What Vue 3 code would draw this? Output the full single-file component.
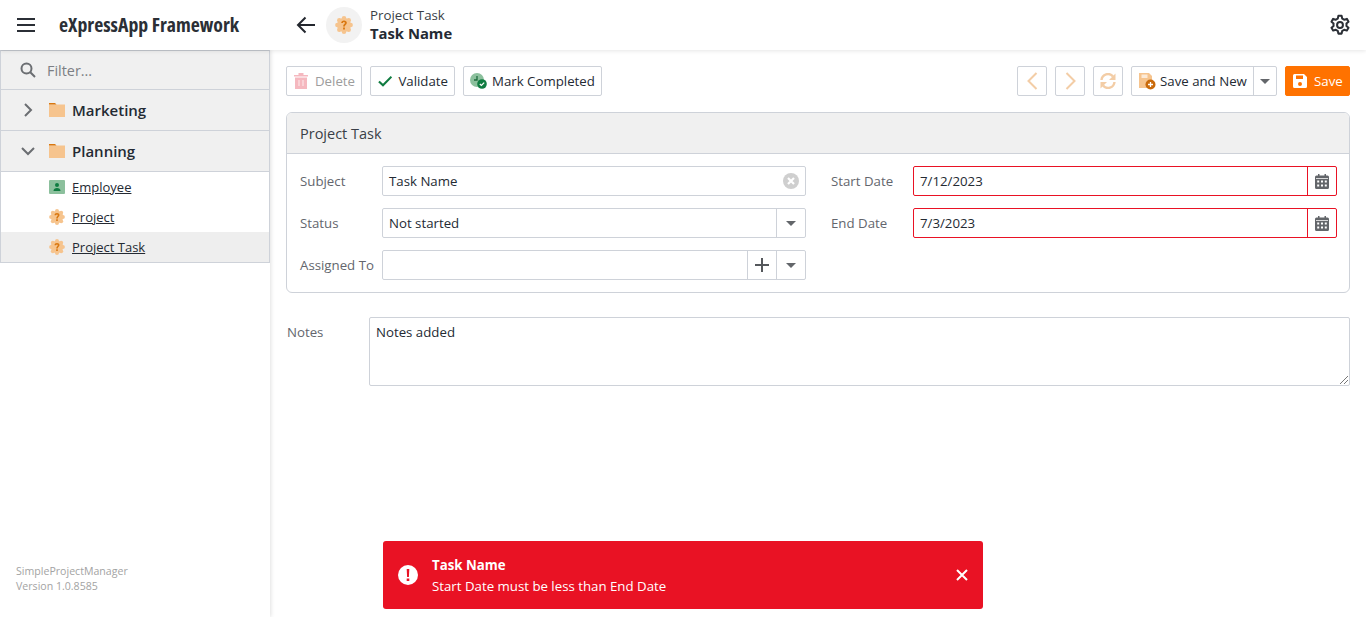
<template>
  <div class="app">
    <svg width="0" height="0" class="defs">
      <defs>
        <g id="q-badge">
          <circle cx="8" cy="8" r="6.200" fill="#f6c48e"/>
          <circle v-for="b in bumps" :key="b.x" :cx="b.x" :cy="b.y" r="2" fill="#f6c48e"/>
          <path d="M5.500 6.300C5.500 4.900 6.600 4 8 4s2.500.8 2.500 2.100c0 1.800-1.700 1.800-1.700 3.300H7.200c0-2.200 1.600-2.200 1.600-3.200 0-.5-.3-.8-.8-.8s-.9.300-.9.900zM7.200 10.200h1.600v1.700H7.200z" fill="#d9770f"/>
        </g>
        <g id="cal">
          <path fill-rule="evenodd" d="M3 0h1.500v1.500h5V0H11v1.500h1.500A1.500 1.500 0 0 1 14 3v10.500a1.500 1.500 0 0 1-1.500 1.500h-11A1.500 1.500 0 0 1 0 13.500V3a1.500 1.500 0 0 1 1.500-1.500H3zM1 4v.8h12V4zM2.200 6.500v2h2v-2zM6 6.500v2h2v-2zM9.800 6.500v2h2v-2zM2.200 10.500v2h2v-2zM6 10.500v2h2v-2zM9.800 10.500v2h2v-2z" fill="#63666a"/>
        </g>
      </defs>
    </svg>

    <header class="topbar">
      <div class="brand">
        <button class="plain menu" aria-label="Menu">
          <svg width="18" height="14" viewBox="0 0 18 14"><path d="M0 1h18M0 7h18M0 13h18" stroke="#2b2f36" stroke-width="2" fill="none"/></svg>
        </button>
        <span class="brand-name">eXpressApp Framework</span>
      </div>
      <div class="title-area">
        <button class="plain back" aria-label="Back">
          <svg width="20" height="18" viewBox="0 0 20 18"><path d="M19 9H2M9.500 1.500 2 9l7.500 7.500" stroke="#23272e" stroke-width="2" fill="none"/></svg>
        </button>
        <div class="avatar"><svg width="18" height="18" viewBox="0 0 16 16"><use href="#q-badge"/></svg></div>
        <div class="titles">
          <div class="t1">Project Task</div>
          <div class="t2">Task Name</div>
        </div>
      </div>
      <button class="plain gear" aria-label="Settings">
        <svg width="22" height="22" viewBox="0 0 24 24" fill="none" stroke="#2b2f36" stroke-width="2.200" stroke-linejoin="round"><circle cx="12" cy="12" r="3.200"/><path d="M10.200 2h3.600l.6 3a7.500 7.500 0 0 1 2.200 1.300l2.900-1 1.800 3.100-2.300 2a7.500 7.500 0 0 1 0 2.600l2.300 2-1.800 3.100-2.900-1a7.500 7.500 0 0 1-2.200 1.300l-.6 3h-3.600l-.6-3a7.500 7.500 0 0 1-2.200-1.300l-2.900 1-1.800-3.100 2.300-2a7.500 7.500 0 0 1 0-2.600l-2.300-2 1.800-3.100 2.900 1A7.500 7.500 0 0 1 9.600 5z"/></svg>
      </button>
    </header>

    <div class="body">
      <aside class="sidebar">
        <nav class="nav">
          <div class="filter">
            <svg width="16" height="16" viewBox="0 0 16 16" fill="none" stroke="#6b6e72" stroke-width="2"><circle cx="6.500" cy="6.500" r="5"/><path d="M10.300 10.300 15 15"/></svg>
            <span>Filter...</span>
          </div>
          <div class="group">
            <svg class="chev" width="14" height="14" viewBox="0 0 14 14" fill="none" stroke="#6b6e72" stroke-width="2"><path d="M4 1l6 6-6 6"/></svg>
            <svg class="folder" width="16" height="14" viewBox="0 0 16 14"><path d="M0 1.500h16V14H0z" fill="#f6c48e"/><path d="M0 0h6l1.500 1.500H0z" fill="#d9770f"/></svg>
            <span>Marketing</span>
          </div>
          <div class="group">
            <svg class="chev" width="14" height="14" viewBox="0 0 14 14" fill="none" stroke="#6b6e72" stroke-width="2"><path d="M1 4l6 6 6-6"/></svg>
            <svg class="folder" width="16" height="14" viewBox="0 0 16 14"><path d="M0 1.500h16V14H0z" fill="#f6c48e"/><path d="M0 0h6l1.500 1.500H0z" fill="#d9770f"/></svg>
            <span>Planning</span>
          </div>
          <a class="item">
            <svg width="16" height="14" viewBox="0 0 16 14"><rect width="16" height="14" rx="1" fill="#8cc09d"/><circle cx="8" cy="5" r="2" fill="#107c41"/><path d="M4.500 11c0-2 1.500-3 3.500-3s3.500 1 3.500 3z" fill="#107c41"/></svg>
            <span>Employee</span>
          </a>
          <a class="item">
            <svg width="16" height="16" viewBox="0 0 16 16"><use href="#q-badge"/></svg>
            <span>Project</span>
          </a>
          <a class="item active">
            <svg width="16" height="16" viewBox="0 0 16 16"><use href="#q-badge"/></svg>
            <span>Project Task</span>
          </a>
        </nav>
        <div class="about">
          <div>SimpleProjectManager</div>
          <div>Version 1.0.8585</div>
        </div>
      </aside>

      <main class="main">
        <div class="toolbar">
          <button class="btn disabled">
            <svg width="14" height="16" viewBox="0 0 14 16"><path d="M0 2h14v1.500H0zM4.500 0h5v2h-5z" fill="#f5b8bf"/><path d="M1 4.500h12V16H1z" fill="#f5b8bf"/><path d="M5 7v6M9 7v6" stroke="#fbe0e3" stroke-width="1.300"/></svg>
            <span>Delete</span>
          </button>
          <button class="btn validate">
            <svg width="15" height="12" viewBox="0 0 15 12" fill="none"><path d="M1 6.500 5.200 10.500 14 1.500" stroke="#107c41" stroke-width="2.200"/></svg>
            <span>Validate</span>
          </button>
          <button class="btn mark">
            <svg width="17" height="16" viewBox="0 0 17 16"><circle cx="7" cy="7" r="7" fill="#8cc09d"/><path d="M7 3v4H4" stroke="#1d6b3c" stroke-width="1.300" fill="none"/><circle cx="12" cy="11" r="4.800" fill="#107c41"/><path d="M9.800 11l1.600 1.500 2.800-2.900" stroke="#fff" stroke-width="1.200" fill="none"/></svg>
            <span>Mark Completed</span>
          </button>
          <div class="spacer"></div>
          <button class="btn square" aria-label="Previous">
            <svg width="11" height="18" viewBox="0 0 11 18" fill="none"><path d="M9.500 1 1.500 9l8 8" stroke="#f3cda6" stroke-width="2"/></svg>
          </button>
          <button class="btn square" aria-label="Next">
            <svg width="11" height="18" viewBox="0 0 11 18" fill="none"><path d="M1.500 1l8 8-8 8" stroke="#f3cda6" stroke-width="2"/></svg>
          </button>
          <button class="btn square" aria-label="Refresh">
            <svg width="16" height="16" viewBox="0 0 16 16" fill="none" stroke="#f3cda6" stroke-width="2.400"><path d="M1.500 7A6.500 6.500 0 0 1 13 3.500"/><path d="M14.500 9A6.500 6.500 0 0 1 3 12.500"/><path d="M15.500 .5v6.500h-6.500z" fill="#f3cda6" stroke="none"/><path d="M.5 15.500V9h6.500z" fill="#f3cda6" stroke="none"/></svg>
          </button>
          <div class="split">
            <button class="split-main">
              <svg width="18" height="17" viewBox="0 0 18 17"><path d="M1 0h10l3 3v12H1z" fill="#f6c48e"/><path d="M3.500 1.500h6v3.500h-6z" fill="#fff" opacity=".65"/><circle cx="12.500" cy="11.500" r="5" fill="#c96a0a"/><path d="M10 11.500h5M12.500 9v5" stroke="#fff" stroke-width="1.300"/></svg>
              <span>Save and New</span>
            </button>
            <button class="split-arrow" aria-label="More"><i class="caret"></i></button>
          </div>
          <button class="btn primary">
            <svg width="14" height="14" viewBox="0 0 14 14"><path fill-rule="evenodd" d="M1.500 0H11l3 3v9.500a1.500 1.500 0 0 1-1.500 1.500h-11A1.500 1.500 0 0 1 0 12.500v-11A1.500 1.500 0 0 1 1.500 0zM3 1.500V5h7V1.500zM7 8a2 2 0 1 0 0 4 2 2 0 0 0 0-4z" fill="#fff"/></svg>
            <span>Save</span>
          </button>
        </div>

        <section class="card">
          <div class="card-head">Project Task</div>
          <div class="card-body">
            <div class="col">
              <div class="field">
                <label>Subject</label>
                <div class="input">
                  <span class="value">Task Name</span>
                  <svg class="clear" width="16" height="16" viewBox="0 0 16 16"><circle cx="8" cy="8" r="8" fill="#cfcfcf"/><path d="M5 5l6 6M11 5l-6 6" stroke="#fff" stroke-width="2.200"/></svg>
                </div>
              </div>
              <div class="field">
                <label>Status</label>
                <div class="input">
                  <span class="value">Not started</span>
                  <span class="addon"><i class="caret"></i></span>
                </div>
              </div>
              <div class="field">
                <label>Assigned To</label>
                <div class="input">
                  <span class="value"></span>
                  <span class="addon"><svg width="14" height="14" viewBox="0 0 14 14"><path d="M7 0v14M0 7h14" stroke="#55585c" stroke-width="2"/></svg></span>
                  <span class="addon"><i class="caret"></i></span>
                </div>
              </div>
            </div>
            <div class="col">
              <div class="field">
                <label>Start Date</label>
                <div class="input invalid">
                  <span class="value">7/12/2023</span>
                  <span class="addon"><svg width="14" height="15" viewBox="0 0 14 15"><use href="#cal"/></svg></span>
                </div>
              </div>
              <div class="field">
                <label>End Date</label>
                <div class="input invalid">
                  <span class="value">7/3/2023</span>
                  <span class="addon"><svg width="14" height="15" viewBox="0 0 14 15"><use href="#cal"/></svg></span>
                </div>
              </div>
            </div>
          </div>
        </section>

        <div class="notes">
          <label>Notes</label>
          <div class="textarea">
            Notes added
            <svg class="grip" width="8" height="8" viewBox="0 0 8 8"><path d="M8 0 0 8M8 4 4 8" stroke="#777" stroke-width="1"/></svg>
          </div>
        </div>
      </main>
    </div>

    <div class="toast">
      <svg width="20" height="20" viewBox="0 0 20 20"><circle cx="10" cy="10" r="10" fill="#fff"/><path d="M8.700 4h2.600l-.4 8H9.100zM8.700 13.500h2.600V16H8.700z" fill="#e91224"/></svg>
      <div class="toast-text">
        <div class="toast-title">Task Name</div>
        <div>Start Date must be less than End Date</div>
      </div>
      <svg class="toast-close" width="12" height="12" viewBox="0 0 12 12"><path d="M1 1l10 10M11 1 1 11" stroke="#fff" stroke-width="2"/></svg>
    </div>
  </div>
</template>

<script setup>
const bumps = Array.from({ length: 8 }, (_, i) => {
  const a = (i * Math.PI) / 4
  return { x: 8 + 5.9 * Math.cos(a), y: 8 + 5.9 * Math.sin(a) }
})
</script>

<style>
html, body { margin: 0; }
</style>

<style scoped>
* { box-sizing: border-box; }
.app {
  position: relative;
  height: 617px;
  overflow: hidden;
  background: #fff;
  color: #242a33;
  font-family: "Open Sans", "Noto Sans", sans-serif;
  font-size: 13.25px;
}
.defs { position: absolute; }
.plain { background: none; border: 0; padding: 0; display: flex; align-items: center; }
.topbar {
  position: relative;
  z-index: 2;
  height: 50px;
  display: flex;
  align-items: center;
  background: #fff;
  box-shadow: 0 1px 4px rgba(0,0,0,.1);
}
.brand { width: 270px; display: flex; align-items: center; flex: none; }
.menu { margin-left: 17px; }
.brand-name {
  margin: -2px 0 0 24px;
  font-size: 19.8px;
  font-weight: 700;
  color: #2b2f36;
  font-stretch: 75%;
  white-space: nowrap;
}
.title-area { display: flex; align-items: center; flex: 1; }
.back { margin-left: 26px; }
.avatar {
  width: 36px; height: 36px; border-radius: 50%;
  background: #f2f2f2; margin-left: 10px;
  display: flex; align-items: center; justify-content: center;
}
.titles { margin-left: 8px; line-height: 18px; margin-top: -2px; }
.t1 { font-size: 13.3px; color: #3a3f47; }
.t2 { font-size: 14.8px; font-weight: 700; color: #242a33; }
.gear { margin-right: 15px; }

.body { display: flex; height: 567px; }
.sidebar {
  width: 270px;
  flex: none;
  display: flex;
  flex-direction: column;
  justify-content: space-between;
  box-shadow: 1px 0 4px rgba(0,0,0,.12);
  position: relative;
  z-index: 1;
}
.nav {
  border: 1px solid #ced2d9;
  border-top-color: #c4c8cf;
}
.filter {
  height: 39px;
  display: flex;
  align-items: center;
  padding-left: 19px;
  gap: 11px;
  background: #f0f0f0;
  border-bottom: 1px solid #ced2d9;
  color: #7c7f84;
  font-size: 14.4px;
}
.group {
  height: 41px;
  display: flex;
  align-items: center;
  background: #f0f0f0;
  border-bottom: 1px solid #ced2d9;
  font-size: 15px;
  font-weight: 600;
  color: #242a33;
  padding-left: 20px;
}
.chev { flex: none; }
.folder { margin-left: 14px; margin-right: 7px; }
.item {
  height: 30px;
  display: flex;
  align-items: center;
  padding-left: 48px;
  gap: 7px;
  color: #242a33;
  text-decoration: underline;
  font-size: 13px;
}
.item.active { background: #eee; }
.about {
  padding: 0 0 23px 16px;
  font-size: 10.6px;
  line-height: 15px;
  color: #a3a3a3;
}

.main { flex: 1; padding: 16px 16px 0; min-width: 0; }
.toolbar { display: flex; gap: 8px; height: 30px; }
.spacer { flex: 1; }
.btn {
  height: 30px;
  display: inline-flex;
  align-items: center;
  gap: 7px;
  padding: 0 6px 0 7px;
  border: 1px solid #ced2d9;
  border-radius: 2px;
  background: #fff;
  font: inherit;
  color: #242a33;
  white-space: nowrap;
}
.btn.disabled { color: #9d9d9d; width: 76px; }
.btn.validate { width: 85px; gap: 6px; }
.btn.mark { width: 139px; padding-left: 6px; gap: 5px; }
.btn.square { width: 30px; justify-content: center; padding: 0; }
.btn.primary {
  width: 65px;
  background: #ff7200;
  border-color: #ff7200;
  color: #fff;
}
.split {
  display: flex;
  height: 30px;
  border: 1px solid #ced2d9;
  border-radius: 2px;
  width: 146px;
}
.split-main {
  flex: 1;
  display: flex;
  align-items: center;
  gap: 4px;
  background: none;
  border: 0;
  padding: 0 0 0 6px;
  font: inherit;
  color: #242a33;
  white-space: nowrap;
}
.split-arrow {
  width: 23px;
  background: none;
  border: 0;
  border-left: 1px solid #ced2d9;
  padding: 0;
  display: flex;
  align-items: center;
  justify-content: center;
}
.caret {
  display: block;
  width: 0; height: 0;
  border-left: 5px solid transparent;
  border-right: 5px solid transparent;
  border-top: 5px solid #63666a;
}

.card {
  margin-top: 16px;
  height: 181px;
  border: 1px solid #ced2d9;
  border-radius: 6px;
  overflow: hidden;
}
.card-head {
  height: 41px;
  padding-left: 13px;
  display: flex;
  align-items: center;
  background: #f0f0f0;
  border-bottom: 1px solid #ced2d9;
  font-size: 14.5px;
  color: #3a3f47;
}
.card-body {
  display: flex;
  gap: 25px;
  padding: 12px 12px 0 13px;
}
.col { flex: 1; display: flex; flex-direction: column; gap: 12px; min-width: 0; }
.field { display: flex; align-items: center; height: 30px; }
.field label { width: 82px; flex: none; color: #63666d; }
.input {
  flex: 1;
  height: 30px;
  display: flex;
  align-items: center;
  border: 1px solid #ced2d9;
  border-radius: 2px;
  min-width: 0;
}
.value { flex: 1; padding-left: 6px; }
.clear { margin-right: 6px; }
.addon {
  width: 29px;
  height: 100%;
  flex: none;
  display: flex;
  align-items: center;
  justify-content: center;
  border-left: 1px solid #ced2d9;
}
.invalid { border-color: #e91224; }
.invalid .addon { border-left-color: #e91224; }

.notes { margin-top: 24px; display: flex; }
.notes label { width: 83px; flex: none; padding: 6px 0 0 1px; color: #63666d; }
.textarea {
  position: relative;
  flex: 1;
  height: 69px;
  border: 1px solid #ced2d9;
  border-radius: 2px;
  padding: 5px 6px;
}
.grip { position: absolute; right: 1px; bottom: 1px; }

.toast {
  position: absolute;
  left: 383px;
  top: 541px;
  width: 600px;
  height: 68px;
  z-index: 5;
  display: flex;
  align-items: center;
  padding: 0 15px;
  background: #e91224;
  border-radius: 3px;
  color: #fff;
}
.toast-text { margin-left: 14px; flex: 1; line-height: 21px; }
.toast-title { font-weight: 700; margin-top: 1px; }
</style>
